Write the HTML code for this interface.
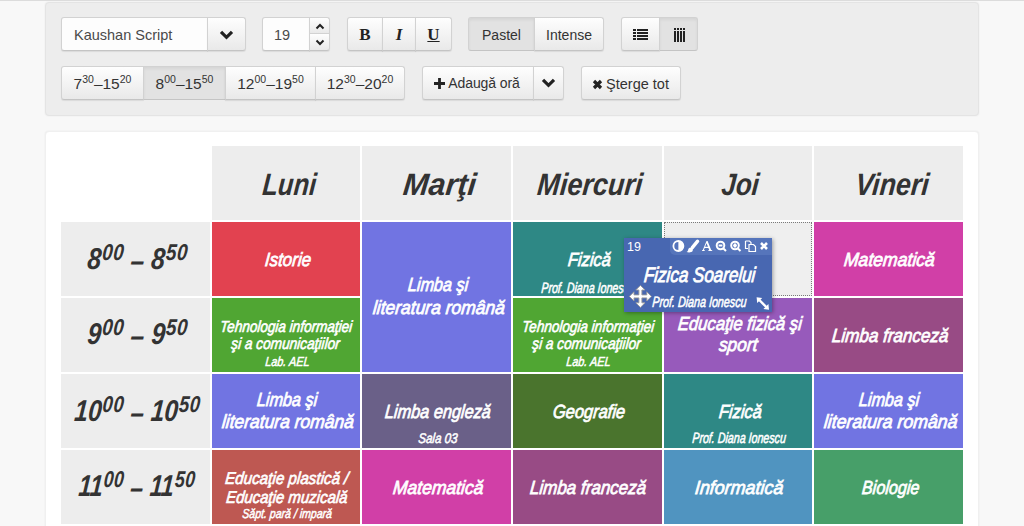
<!DOCTYPE html><html><head><meta charset="utf-8"><style>
*{margin:0;padding:0;box-sizing:border-box}
html,body{width:1024px;height:526px;overflow:hidden;background:#f8f8f8;font-family:"Liberation Sans",sans-serif;position:relative}
.abs{position:absolute}
.topline{position:absolute;left:0;top:0;width:1024px;height:1px;background:#dcdcdc}
.panel{position:absolute;left:45px;top:2px;width:934px;height:114px;background:#ededed;border:1px solid #e4e4e4;border-radius:4px;box-shadow:0 0 2px rgba(0,0,0,.07)}
.card{position:absolute;left:45px;top:131px;width:934px;height:420px;background:#fff;border:1px solid #f0f0f0;border-radius:4px;box-shadow:0 0 2px rgba(0,0,0,.07)}
.btn{position:absolute;height:33px;border:1px solid #d2d2d2;border-bottom-color:#c4c4c4;background:linear-gradient(#fefefe,#e9e9e9);box-shadow:0 1px 1px rgba(0,0,0,.08);color:#333;font-size:14px;display:flex;align-items:center;justify-content:center;white-space:nowrap}
.btn.act{background:#e2e2e2;box-shadow:inset 0 2px 3px rgba(0,0,0,.06)}
.grp{position:absolute;height:33px}
.cell{position:absolute;background:#ededed;overflow:hidden}
.t{position:absolute;white-space:nowrap;transform-origin:0 0;font-style:italic;font-weight:bold;line-height:1;color:#fff;font-family:"Liberation Sans",sans-serif}
.h{color:#333}
.t sup{font-size:76%;vertical-align:0;position:relative;top:-0.4em;margin-left:0.02em;letter-spacing:0.03em}
.t .dash{position:relative;top:0.05em}
</style></head><body><div class="topline"></div>
<div class="panel"></div>
<div class="btn" style="left:61px;top:17px;width:147px;height:34px;background:#fdfdfd;border-radius:3px 0 0 3px"><span style="position:absolute;left:12px;top:9px;font-size:14.5px;color:#4a4a4a">Kaushan Script</span></div>
<div class="btn" style="left:207px;top:17px;width:39px;height:34px;padding-top:2px;border-radius:0 3px 3px 0"><svg width="15" height="10" viewBox="0 0 15 10"><path d="M2 1.8 L7.5 7.3 L13 1.8" fill="none" stroke="#222" stroke-width="3.2"/></svg></div>
<div class="btn" style="left:262px;top:17px;width:48px;height:34px;background:#fdfdfd;border-radius:3px 0 0 3px"><span style="font-size:14.5px;color:#4a4a4a;position:relative;left:-4px;top:1px">19</span></div>
<div class="btn" style="left:309px;top:17px;width:21px;height:17px;padding-top:2px;border-radius:0 3px 0 0"><svg width="10" height="7" viewBox="0 0 10 7"><path d="M1.5 5.5 L5 2 L8.5 5.5" fill="none" stroke="#222" stroke-width="2"/></svg></div>
<div class="btn" style="left:309px;top:33px;width:21px;height:18px;padding-top:0px;border-radius:0 0 3px 0"><svg width="10" height="7" viewBox="0 0 10 7"><path d="M1.5 1.5 L5 5 L8.5 1.5" fill="none" stroke="#222" stroke-width="2"/></svg></div>
<div class="btn" style="left:347px;top:17px;width:36px;height:34px;padding-top:2px;border-radius:3px 0 0 3px"><b style="font-family:'Liberation Serif',serif;font-size:17px;color:#222">B</b></div>
<div class="btn" style="left:382px;top:17px;width:34px;height:34px;padding-top:2px;border-radius:0"><i style="font-family:'Liberation Serif',serif;font-size:17px;color:#222;font-weight:bold">I</i></div>
<div class="btn" style="left:415px;top:17px;width:37px;height:34px;padding-top:2px;border-radius:0 3px 3px 0"><u style="font-family:'Liberation Serif',serif;font-size:17px;color:#222;font-weight:bold">U</u></div>
<div class="btn act" style="left:468px;top:17px;width:67px;height:34px;padding-top:2px;border-radius:3px 0 0 3px">Pastel</div>
<div class="btn" style="left:534px;top:17px;width:70px;height:34px;padding-top:2px;border-radius:0 3px 3px 0">Intense</div>
<div class="btn" style="left:621px;top:17px;width:39px;height:34px;padding-top:2px;border-radius:3px 0 0 3px"><svg style="position:absolute;left:11px;top:11px" width="16" height="12" viewBox="0 0 16 12"><rect x="0" y="0" width="3" height="2" fill="#222"/><rect x="4" y="0" width="11" height="2" fill="#222"/><rect x="0" y="3" width="3" height="2" fill="#222"/><rect x="4" y="3" width="11" height="2" fill="#222"/><rect x="0" y="6" width="3" height="2" fill="#222"/><rect x="4" y="6" width="11" height="2" fill="#222"/><rect x="0" y="9" width="3" height="2" fill="#222"/><rect x="4" y="9" width="11" height="2" fill="#222"/></svg></div>
<div class="btn act" style="left:659px;top:17px;width:39px;height:34px;padding-top:2px;border-radius:0 3px 3px 0"><svg style="position:absolute;left:14px;top:10px" width="12" height="15" viewBox="0 0 12 15"><rect x="0" y="0" width="2" height="2" fill="#222"/><rect x="0" y="3" width="2" height="11" fill="#222"/><rect x="3" y="0" width="2" height="2" fill="#222"/><rect x="3" y="3" width="2" height="11" fill="#222"/><rect x="6" y="0" width="2" height="2" fill="#222"/><rect x="6" y="3" width="2" height="11" fill="#222"/><rect x="9" y="0" width="2" height="2" fill="#222"/><rect x="9" y="3" width="2" height="11" fill="#222"/></svg></div>
<div class="btn" style="left:61px;top:66px;width:83px;height:34px;border-radius:3px 0 0 3px"><span style="font-size:15.5px;color:#333">7<sup style="font-size:10.5px;top:-6px">30</sup>&#8211;15<sup style="font-size:10.5px;top:-6px">20</sup></span></div>
<div class="btn act" style="left:143px;top:66px;width:83px;height:34px;border-radius:0"><span style="font-size:15.5px;color:#333">8<sup style="font-size:10.5px;top:-6px">00</sup>&#8211;15<sup style="font-size:10.5px;top:-6px">50</sup></span></div>
<div class="btn" style="left:225px;top:66px;width:91px;height:34px;border-radius:0"><span style="font-size:15.5px;color:#333">12<sup style="font-size:10.5px;top:-6px">00</sup>&#8211;19<sup style="font-size:10.5px;top:-6px">50</sup></span></div>
<div class="btn" style="left:315px;top:66px;width:90px;height:34px;border-radius:0 3px 3px 0"><span style="font-size:15.5px;color:#333">12<sup style="font-size:10.5px;top:-6px">30</sup>&#8211;20<sup style="font-size:10.5px;top:-6px">20</sup></span></div>
<div class="btn" style="left:422px;top:66px;width:112px;height:34px;padding-right:2px;border-radius:3px 0 0 3px"><svg width="11" height="11" viewBox="0 0 11 11" style="margin-right:3px;position:relative;top:0.5px"><path d="M5.5 0V11M0 5.5H11" stroke="#222" stroke-width="2.8"/></svg><span style="font-size:14px;letter-spacing:-0.1px">Adaugă oră</span></div>
<div class="btn" style="left:533px;top:66px;width:31px;height:34px;border-radius:0 3px 3px 0"><svg width="15" height="10" viewBox="0 0 15 10"><path d="M2 1.8 L7.5 7.3 L13 1.8" fill="none" stroke="#222" stroke-width="3.2"/></svg></div>
<div class="btn" style="left:581px;top:66px;width:100px;height:34px;padding-right:1px;border-radius:3px"><svg width="11" height="11" viewBox="0 0 11 11" style="margin-right:3px;position:relative;top:1px"><path d="M2 2L9 9M9 2L2 9" stroke="#222" stroke-width="3.2"/></svg><span style="font-size:14.5px;position:relative;top:0.5px">Şterge tot</span></div>
<div class="card"></div>
<div class="cell" style="left:212px;top:146px;width:148px;height:74px;background:#ededed;"></div>
<div class="cell" style="left:362px;top:146px;width:149px;height:74px;background:#ededed;"></div>
<div class="cell" style="left:513px;top:146px;width:149px;height:74px;background:#ededed;"></div>
<div class="cell" style="left:664px;top:146px;width:148px;height:74px;background:#ededed;"></div>
<div class="cell" style="left:814px;top:146px;width:149px;height:74px;background:#ededed;"></div>
<div class="cell" style="left:61px;top:222px;width:149px;height:74px;background:#ededed;"></div>
<div class="cell" style="left:61px;top:298px;width:149px;height:74px;background:#ededed;"></div>
<div class="cell" style="left:61px;top:374px;width:149px;height:74px;background:#ededed;"></div>
<div class="cell" style="left:61px;top:450px;width:149px;height:74px;background:#ededed;"></div>
<div class="cell" style="left:212px;top:222px;width:148px;height:74px;background:#e24250;"></div>
<div class="cell" style="left:362px;top:222px;width:149px;height:150px;background:#7174e2;"></div>
<div class="cell" style="left:513px;top:222px;width:149px;height:74px;background:#2e8885;"></div>
<div class="cell" style="left:814px;top:222px;width:149px;height:74px;background:#d13fa7;"></div>
<div class="cell" style="left:212px;top:298px;width:148px;height:74px;background:#50a633;"></div>
<div class="cell" style="left:513px;top:298px;width:149px;height:74px;background:#50a633;"></div>
<div class="cell" style="left:664px;top:298px;width:148px;height:74px;background:#975abb;"></div>
<div class="cell" style="left:814px;top:298px;width:149px;height:74px;background:#984b85;"></div>
<div class="cell" style="left:212px;top:374px;width:148px;height:74px;background:#7174e2;"></div>
<div class="cell" style="left:362px;top:374px;width:149px;height:74px;background:#6a6088;"></div>
<div class="cell" style="left:513px;top:374px;width:149px;height:74px;background:#4a742d;"></div>
<div class="cell" style="left:664px;top:374px;width:148px;height:74px;background:#2e8885;"></div>
<div class="cell" style="left:814px;top:374px;width:149px;height:74px;background:#7174e2;"></div>
<div class="cell" style="left:212px;top:450px;width:148px;height:74px;background:#be5852;"></div>
<div class="cell" style="left:362px;top:450px;width:149px;height:74px;background:#d13fa7;"></div>
<div class="cell" style="left:513px;top:450px;width:149px;height:74px;background:#984b85;"></div>
<div class="cell" style="left:664px;top:450px;width:148px;height:74px;background:#5094c0;"></div>
<div class="cell" style="left:814px;top:450px;width:149px;height:74px;background:#479f69;"></div>
<div class="cell" style="left:664px;top:222px;width:148px;height:74px;background:#efefef;border:1px dotted #7a7a7a"></div>
<div class="t h" style="left:264.0px;top:169.3px;font-size:31px;transform:scaleX(0.822) skewX(-6deg)">Luni</div>
<div class="t h" style="left:404.6px;top:169.3px;font-size:31px;transform:scaleX(0.983) skewX(-6deg)">Marţi</div>
<div class="t h" style="left:538.7px;top:169.3px;font-size:31px;transform:scaleX(0.873) skewX(-6deg)">Miercuri</div>
<div class="t h" style="left:723.2px;top:169.3px;font-size:31px;transform:scaleX(0.840) skewX(-6deg)">Joi</div>
<div class="t h" style="left:856.8px;top:169.3px;font-size:31px;transform:scaleX(0.865) skewX(-6deg)">Vineri</div>
<div class="t h" style="left:88.9px;top:243.6px;font-size:30px;transform:scaleX(0.825) skewX(-6deg)">8<sup>00</sup> <span class="dash">–</span> 8<sup>50</sup></div>
<div class="t h" style="left:88.8px;top:319.1px;font-size:30px;transform:scaleX(0.826) skewX(-6deg)">9<sup>00</sup> <span class="dash">–</span> 9<sup>50</sup></div>
<div class="t h" style="left:75.8px;top:395.6px;font-size:30px;transform:scaleX(0.812) skewX(-6deg)">10<sup>00</sup> <span class="dash">–</span> 10<sup>50</sup></div>
<div class="t h" style="left:80.2px;top:471.1px;font-size:30px;transform:scaleX(0.776) skewX(-6deg)">11<sup>00</sup> <span class="dash">–</span> 11<sup>50</sup></div>
<div class="t" style="left:265.6px;top:249.9px;font-size:19px;font-weight:normal;-webkit-text-stroke:0.76px #fff;transform:scaleX(0.890) skewX(-6deg)">Istorie</div>
<div class="t" style="left:409.4px;top:274.9px;font-size:19px;font-weight:normal;-webkit-text-stroke:0.76px #fff;transform:scaleX(0.851) skewX(-6deg)">Limba şi</div>
<div class="t" style="left:373.5px;top:297.9px;font-size:19px;font-weight:normal;-webkit-text-stroke:0.76px #fff;transform:scaleX(0.919) skewX(-6deg)">literatura română</div>
<div class="t" style="left:568.7px;top:249.9px;font-size:19px;font-weight:normal;-webkit-text-stroke:0.76px #fff;transform:scaleX(0.863) skewX(-6deg)">Fizică</div>
<div class="t" style="left:542.0px;top:279.6px;font-size:15px;font-weight:normal;-webkit-text-stroke:0.6px #fff;transform:scaleX(0.710) skewX(-6deg)">Prof. Diana Ionescu</div>
<div class="t" style="left:845.3px;top:250.1px;font-size:19px;font-weight:normal;-webkit-text-stroke:0.76px #fff;transform:scaleX(0.926) skewX(-6deg)">Matematică</div>
<div class="t" style="left:221.2px;top:318.5px;font-size:16px;font-weight:normal;-webkit-text-stroke:0.64px #fff;transform:scaleX(0.846) skewX(-6deg)">Tehnologia informaţiei</div>
<div class="t" style="left:231.9px;top:336.0px;font-size:16px;font-weight:normal;-webkit-text-stroke:0.64px #fff;transform:scaleX(0.853) skewX(-6deg)">şi a comunicaţiilor</div>
<div class="t" style="left:265.5px;top:354.6px;font-size:13px;font-weight:normal;-webkit-text-stroke:0.52px #fff;transform:scaleX(0.833) skewX(-6deg)">Lab. AEL</div>
<div class="t" style="left:522.7px;top:318.5px;font-size:16px;font-weight:normal;-webkit-text-stroke:0.64px #fff;transform:scaleX(0.846) skewX(-6deg)">Tehnologia informaţiei</div>
<div class="t" style="left:533.4px;top:336.0px;font-size:16px;font-weight:normal;-webkit-text-stroke:0.64px #fff;transform:scaleX(0.853) skewX(-6deg)">şi a comunicaţiilor</div>
<div class="t" style="left:567.0px;top:354.6px;font-size:13px;font-weight:normal;-webkit-text-stroke:0.52px #fff;transform:scaleX(0.833) skewX(-6deg)">Lab. AEL</div>
<div class="t" style="left:679.2px;top:314.3px;font-size:19px;font-weight:normal;-webkit-text-stroke:0.76px #fff;transform:scaleX(0.875) skewX(-6deg)">Educaţie fizică şi</div>
<div class="t" style="left:720.4px;top:334.9px;font-size:19px;font-weight:normal;-webkit-text-stroke:0.76px #fff;transform:scaleX(0.911) skewX(-6deg)">sport</div>
<div class="t" style="left:833.2px;top:325.7px;font-size:19px;font-weight:normal;-webkit-text-stroke:0.76px #fff;transform:scaleX(0.897) skewX(-6deg)">Limba franceză</div>
<div class="t" style="left:258.4px;top:389.9px;font-size:19px;font-weight:normal;-webkit-text-stroke:0.76px #fff;transform:scaleX(0.851) skewX(-6deg)">Limba şi</div>
<div class="t" style="left:222.5px;top:411.9px;font-size:19px;font-weight:normal;-webkit-text-stroke:0.76px #fff;transform:scaleX(0.919) skewX(-6deg)">literatura română</div>
<div class="t" style="left:386.1px;top:401.9px;font-size:19px;font-weight:normal;-webkit-text-stroke:0.76px #fff;transform:scaleX(0.856) skewX(-6deg)">Limba engleză</div>
<div class="t" style="left:418.8px;top:431.0px;font-size:14px;font-weight:normal;-webkit-text-stroke:0.56px #fff;transform:scaleX(0.827) skewX(-6deg)">Sala 03</div>
<div class="t" style="left:553.8px;top:401.9px;font-size:19px;font-weight:normal;-webkit-text-stroke:0.76px #fff;transform:scaleX(0.865) skewX(-6deg)">Geografie</div>
<div class="t" style="left:719.7px;top:401.9px;font-size:19px;font-weight:normal;-webkit-text-stroke:0.76px #fff;transform:scaleX(0.863) skewX(-6deg)">Fizică</div>
<div class="t" style="left:693.0px;top:430.2px;font-size:15px;font-weight:normal;-webkit-text-stroke:0.6px #fff;transform:scaleX(0.710) skewX(-6deg)">Prof. Diana Ionescu</div>
<div class="t" style="left:860.4px;top:389.9px;font-size:19px;font-weight:normal;-webkit-text-stroke:0.76px #fff;transform:scaleX(0.851) skewX(-6deg)">Limba şi</div>
<div class="t" style="left:824.6px;top:411.9px;font-size:19px;font-weight:normal;-webkit-text-stroke:0.76px #fff;transform:scaleX(0.930) skewX(-6deg)">literatura română</div>
<div class="t" style="left:225.9px;top:469.5px;font-size:17px;font-weight:normal;-webkit-text-stroke:0.68px #fff;transform:scaleX(0.894) skewX(-6deg)">Educaţie plastică /</div>
<div class="t" style="left:227.4px;top:488.6px;font-size:17px;font-weight:normal;-webkit-text-stroke:0.68px #fff;transform:scaleX(0.880) skewX(-6deg)">Educaţie muzicală</div>
<div class="t" style="left:242.8px;top:506.6px;font-size:13px;font-weight:normal;-webkit-text-stroke:0.52px #fff;transform:scaleX(0.811) skewX(-6deg)">Săpt. pară / impară</div>
<div class="t" style="left:393.6px;top:477.9px;font-size:19px;font-weight:normal;-webkit-text-stroke:0.76px #fff;transform:scaleX(0.922) skewX(-6deg)">Matematică</div>
<div class="t" style="left:531.3px;top:477.9px;font-size:19px;font-weight:normal;-webkit-text-stroke:0.76px #fff;transform:scaleX(0.895) skewX(-6deg)">Limba franceză</div>
<div class="t" style="left:696.1px;top:477.9px;font-size:19px;font-weight:normal;-webkit-text-stroke:0.76px #fff;transform:scaleX(0.941) skewX(-6deg)">Informatică</div>
<div class="t" style="left:863.4px;top:477.9px;font-size:19px;font-weight:normal;-webkit-text-stroke:0.76px #fff;transform:scaleX(0.849) skewX(-6deg)">Biologie</div>
<div class="t" style="z-index:6;left:645.1px;top:264.2px;font-size:21px;font-weight:normal;-webkit-text-stroke:0.84px #fff;transform:scaleX(0.809) skewX(-6deg)">Fizica Soarelui</div>
<div class="t" style="z-index:6;left:652.7px;top:294.3px;font-size:15px;font-weight:normal;-webkit-text-stroke:0.6px #fff;transform:scaleX(0.715) skewX(-6deg)">Prof. Diana Ionescu</div>
<div style="position:absolute;z-index:5;left:624px;top:238px;width:148px;height:74px;background:#4867b1;box-shadow:1px 1px 4px rgba(0,0,0,.35)">
<div style="position:absolute;left:46px;top:0;width:102px;height:17px;background:#5675bb;border-bottom-left-radius:5px"></div>
<div style="position:absolute;left:3px;top:2px;font-size:12.5px;line-height:14px;color:#fff;font-family:'Liberation Sans',sans-serif">19</div>
<svg style="position:absolute;left:0;top:0" width="148" height="74" viewBox="0 0 148 74">
 <g fill="#fff" stroke="none">
  <!-- adjust -->
  <circle cx="54.4" cy="8" r="5" fill="none" stroke="#fff" stroke-width="1.8"/>
  <path d="M54.4 3 A5 5 0 0 1 54.4 13 Z"/>
  <!-- brush -->
  <path d="M73.6 3.2 L68.3 9.6" stroke="#fff" stroke-width="3.4" stroke-linecap="round"/>
  <path d="M66.3 9.8 C68.6 9.8 69.4 11.6 68.6 13 C67.6 14.6 64.6 14.8 62.6 14 C64 13.4 64 12.6 64.2 11.6 C64.5 10.4 65.3 9.8 66.3 9.8 Z"/>
  <!-- A -->
  <path d="M78 13 L78 12.2 L78.8 12 L82.5 3 L83.6 3 L87.2 12 L88.2 12.2 L88.2 13 L84.3 13 L84.3 12.2 L85.2 12 L84.4 10 L80.7 10 L79.9 12 L80.8 12.2 L80.8 13 Z M81.1 8.8 L84 8.8 L82.55 5.2 Z"/>
 </g>
 <g fill="none" stroke="#fff" stroke-width="2">
  <circle cx="96.5" cy="7.5" r="3.8"/>
  <path d="M99.2 10.2 L102 13"/>
  <path d="M94.6 7.5 H98.4"/>
  <circle cx="111" cy="7.5" r="3.8"/>
  <path d="M113.7 10.2 L116.5 13"/>
  <path d="M109.1 7.5 H112.9 M111 5.6 V9.4"/>
 </g>
 <g fill="none" stroke="#fff" stroke-width="1.2">
  <path d="M121.5 3 H125.5 L127 4.5 V7 M121.5 3 V10.5 H124"/>
  <path d="M125 6.5 H129.5 L131.5 8.5 V13.5 H125 Z"/>
 </g>
 <path d="M137 5 L143 11 M143 5 L137 11" stroke="#fff" stroke-width="2.6"/>
 <!-- move -->
 <g transform="translate(16.4,58.4)">
  <path d="M0 -11 L4.6 -6.4 L1.5 -6.4 L1.5 -1.5 L6.4 -1.5 L6.4 -4.6 L11 0 L6.4 4.6 L6.4 1.5 L1.5 1.5 L1.5 6.4 L4.6 6.4 L0 11 L-4.6 6.4 L-1.5 6.4 L-1.5 1.5 L-6.4 1.5 L-6.4 4.6 L-11 0 L-6.4 -4.6 L-6.4 -1.5 L-1.5 -1.5 L-1.5 -6.4 L-4.6 -6.4 Z" fill="#fff" stroke="#9a9a9a" stroke-width="0.9" stroke-linejoin="miter"/>
 </g>
 <!-- resize -->
 <g transform="translate(138.8,65.5)" fill="#fff">
  <path d="M-6.2 -6.2 L-0.6 -5.6 L-5.6 -0.6 Z M6.2 6.2 L0.6 5.6 L5.6 0.6 Z"/>
  <path d="M-3.5 -3.5 L3.5 3.5" stroke="#fff" stroke-width="2.4"/>
 </g>
</svg>
</div>
</body></html>
